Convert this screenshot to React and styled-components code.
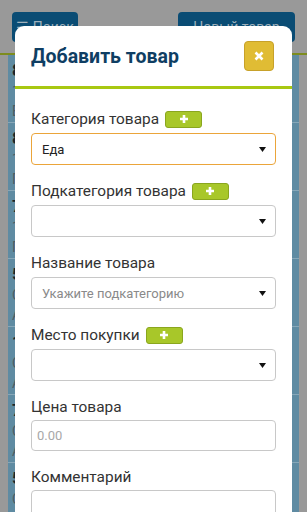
import React from 'react'
import styled, { createGlobalStyle } from 'styled-components'

const GlobalStyle = createGlobalStyle`
    html, body {
        margin: 0;
        padding: 0;
        background: #999999;
        font-family: Roboto, "Liberation Sans", sans-serif;
        overflow: hidden;
    }
    * { box-sizing: border-box; }
`;

const Page = styled.div`
    width: 307px;
    height: 512px;
    overflow: hidden;
`;

const TopBar = styled.div`
    display: flex;
    justify-content: space-between;
    padding: 12px 12px 11px 12px;
    border-bottom: 2px solid #7d8c1e;
`;

const BarButton = styled.div`
    height: 30px;
    width: ${props => props.$width}px;
    background: #0a4c74;
    border-radius: 4px;
    color: #9fb0bb;
    font-size: 14px;
    display: flex;
    align-items: center;
    justify-content: center;
    gap: 6px;
`;

const List = styled.div`
    margin: 0 8px;
    background: #5f8ba2;
`;

const Row = styled.div`
    height: 68px;
    padding: 4px 4px 0 4px;
    border-bottom: 1px solid #87a7b8;
    display: flex;
    flex-direction: column;
    gap: 1px;

    & b {
        font-size: 17px;
        color: #1b2328;
        line-height: 22px;
    }
    & span {
        font-size: 14px;
        color: #4d5b63;
        line-height: 19px;
    }
`;

const Backdrop = styled.div`
    position: fixed;
    inset: 0;
    padding: 26px 15px 0 15px;
    overflow: hidden;
`;

const Modal = styled.div`
    background: #ffffff;
    border-radius: 9px 9px 0 0;
    min-height: 520px;
`;

const Header = styled.div`
    height: 63px;
    padding: 0 18px 0 16px;
    display: flex;
    align-items: center;
    justify-content: space-between;
    border-bottom: 3px solid #a8c812;
`;

const Title = styled.h2`
    margin: 0;
    font-size: 19.5px;
    font-weight: 700;
    color: #0f3e63;
`;

const CloseButton = styled.button`
    width: 30px;
    height: 30px;
    padding: 0;
    border: 1px solid #c7a12a;
    border-radius: 4px;
    background: #e0bc34;
    display: flex;
    align-items: center;
    justify-content: center;
`;

const Body = styled.div`
    padding: 19px 16px 0 16px;
    display: flex;
    flex-direction: column;
    gap: 15px;
`;

const Field = styled.div`
    display: flex;
    flex-direction: column;
    gap: ${props => props.$gap || 3}px;
`;

const LabelRow = styled.div`
    height: 22px;
    display: flex;
    align-items: center;
    gap: 6px;
    font-size: 15.4px;
    color: #333333;
`;

const PlusButton = styled.span`
    width: 37px;
    height: 17px;
    border: 1px solid #8aa61e;
    border-radius: 3px;
    background: #a8c729;
    display: flex;
    align-items: center;
    justify-content: center;
`;

const SelectBox = styled.div`
    height: 32px;
    border: 1px solid ${props => props.$focused ? '#eba53a' : '#c8c8c8'};
    border-radius: 4px;
    padding: 0 9px 0 10px;
    display: flex;
    align-items: center;
    justify-content: space-between;
    font-size: 13px;
    color: ${props => props.$placeholder ? '#8a8a8a' : '#222222'};
`;

const TextInput = styled.div`
    height: 31px;
    border: 1px solid #c8c8c8;
    border-radius: 4px;
    padding: 0 5px;
    display: flex;
    align-items: center;
    font-size: 13px;
    color: #a8a8a8;
`;

const Plus = () => (
    <svg width="10" height="10" viewBox="0 0 10 10">
        <path d="M5 1v8M1 5h8" stroke="#fff" strokeWidth="2.6" />
    </svg>
);

const Cross = () => (
    <svg width="10" height="10" viewBox="0 0 10 10">
        <path d="M1.5 1.5l7 7M8.5 1.5l-7 7" stroke="#fff" strokeWidth="2.6" />
    </svg>
);

const Arrow = () => (
    <svg width="7" height="5" viewBox="0 0 7 5">
        <path d="M0 0h7L3.5 5z" fill="#111" />
    </svg>
);

const rows = [
    ['850.00', '12.05.2017', 'Бытовая химия'],
    ['820.00', '11.05.2017', 'Продукты'],
    ['740.00', '10.05.2017', 'Продукты'],
    ['560.00', 'Сегодня', 'Ашан'],
    ['1200.00', 'Сегодня', 'Ашан'],
    ['700.00', 'Сегодня', 'Ашан'],
    ['540.00', 'Сегодня', 'Ашан'],
];

const fields = [
    { label: 'Категория товара', plus: true, value: 'Еда', focused: true },
    { label: 'Подкатегория товара', plus: true, value: '' },
    { label: 'Название товара', value: 'Укажите подкатегорию', placeholder: true },
    { label: 'Место покупки', plus: true, value: '' },
];

const App = () => {
    return (
        <>
            <GlobalStyle />
            <Page>
                <TopBar>
                    <BarButton $width={66}>☰ Поиск</BarButton>
                    <BarButton $width={117}>Новый товар</BarButton>
                </TopBar>
                <List>
                    {rows.map((r, i) => (
                        <Row key={i}>
                            <b>{r[0]}</b>
                            <span>{r[1]}</span>
                            <span>{r[2]}</span>
                        </Row>
                    ))}
                </List>
            </Page>

            <Backdrop>
                <Modal>
                    <Header>
                        <Title>Добавить товар</Title>
                        <CloseButton><Cross /></CloseButton>
                    </Header>
                    <Body>
                        {fields.map((f) => (
                            <Field key={f.label}>
                                <LabelRow>
                                    {f.label}
                                    {f.plus && <PlusButton><Plus /></PlusButton>}
                                </LabelRow>
                                <SelectBox $focused={f.focused} $placeholder={f.placeholder}>
                                    <span>{f.value}</span>
                                    <Arrow />
                                </SelectBox>
                            </Field>
                        ))}
                        <Field $gap={2}>
                            <LabelRow>Цена товара</LabelRow>
                            <TextInput>0.00</TextInput>
                        </Field>
                        <Field $gap={2}>
                            <LabelRow>Комментарий</LabelRow>
                            <TextInput />
                        </Field>
                    </Body>
                </Modal>
            </Backdrop>
        </>
    )
}

export default App
